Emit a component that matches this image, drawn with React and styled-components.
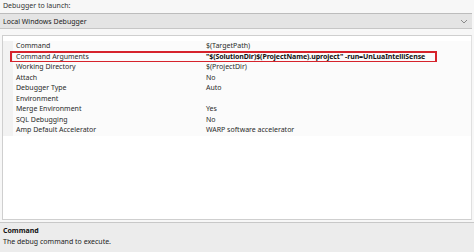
import React from "react";
import styled, { createGlobalStyle } from "styled-components";

const rows = [
  { name: "Command", value: "$(TargetPath)" },
  { name: "Command Arguments", value: "\"$(SolutionDir)$(ProjectName).uproject\" -run=UnLuaIntelliSense", bold: true, marked: true },
  { name: "Working Directory", value: "$(ProjectDir)" },
  { name: "Attach", value: "No" },
  { name: "Debugger Type", value: "Auto" },
  { name: "Environment", value: "" },
  { name: "Merge Environment", value: "Yes" },
  { name: "SQL Debugging", value: "No" },
  { name: "Amp Default Accelerator", value: "WARP software accelerator" },
];

const GlobalStyle = createGlobalStyle`
  html, body {
    margin: 0;
    padding: 0;
    background: #fafafa;
  }
  body {
    font-family: "Noto Sans", "Liberation Sans", sans-serif;
    font-size: 7px;
    color: #222;
  }
`;

const App = () => {
  return (
    <Page>
      <GlobalStyle />
      <Caption>Debugger to launch:</Caption>
      <Select>
        <span>Local Windows Debugger</span>
        <Chevron viewBox="0 0 8 5">
          <path d="M1 1 L4 4 L7 1" fill="none" stroke="#8a8a8a" strokeWidth="1" />
        </Chevron>
      </Select>
      <Grid>
        <Rows>
          {rows.map((row) => (
            <Row key={row.name} $marked={row.marked}>
              <Name>{row.name}</Name>
              <Value $bold={row.bold}>{row.value}</Value>
            </Row>
          ))}
        </Rows>
      </Grid>
      <Description>
        <DescTitle>Command</DescTitle>
        <div>The debug command to execute.</div>
      </Description>
    </Page>
  );
};

const Page = styled.div`
  width: 474px;
  height: 252px;
  display: flex;
  flex-direction: column;
  background: #f7f7f7;
  overflow: hidden;
`;

const Caption = styled.div`
  height: 13px;
  line-height: 11px;
  padding-left: 3px;
  color: #333;
`;

const Select = styled.div`
  height: 14px;
  margin: 0 2px 0 0;
  border-top: 1px solid #bcbcbc;
  border-bottom: 1px solid #c6c6c6;
  background: #e4e4e4;
  display: flex;
  align-items: center;
  justify-content: space-between;
  padding: 0 4px 0 3px;
  color: #222;
`;

const Chevron = styled.svg`
  width: 8px;
  height: 5px;
`;

const Grid = styled.div`
  margin: 6px 2px 2px 2px;
  flex: 1;
  border: 1px solid #cfcfcf;
  border-right-color: #e0e0e0;
  background: #fff;
  padding-top: 5px;
`;

const Rows = styled.div`
  display: flex;
  flex-direction: column;
`;

const Row = styled.div`
  height: 10.5px;
  display: grid;
  grid-template-columns: 190px 1fr;
  align-items: center;
  padding-left: 13px;
  position: relative;
  background: #fbfbfb;
  box-shadow: inset 10px 0 0 #f2f2f2;
  &::after {
    content: "";
    display: ${(p) => (p.$marked ? "block" : "none")};
    position: absolute;
    left: 7px;
    top: -0.5px;
    width: 423px;
    height: 7.5px;
    border: 2px solid #d6232c;
  }
`;

const Name = styled.span`
  line-height: 10px;
  color: #2a2a2a;
  white-space: nowrap;
`;

const Value = styled.span`
  line-height: 10px;
  white-space: nowrap;
  font-weight: ${(p) => (p.$bold ? 700 : 400)};
  letter-spacing: ${(p) => (p.$bold ? "-0.08px" : "0")};
  color: ${(p) => (p.$bold ? "#111" : "#2a2a2a")};
`;

const Description = styled.div`
  height: 27px;
  border-top: 1px solid #c8c8c8;
  background: #ececec;
  padding: 2px 3px 0;
  line-height: 11px;
  color: #222;
`;

const DescTitle = styled.div`
  font-weight: 700;
  color: #111;
`;

export default App;
